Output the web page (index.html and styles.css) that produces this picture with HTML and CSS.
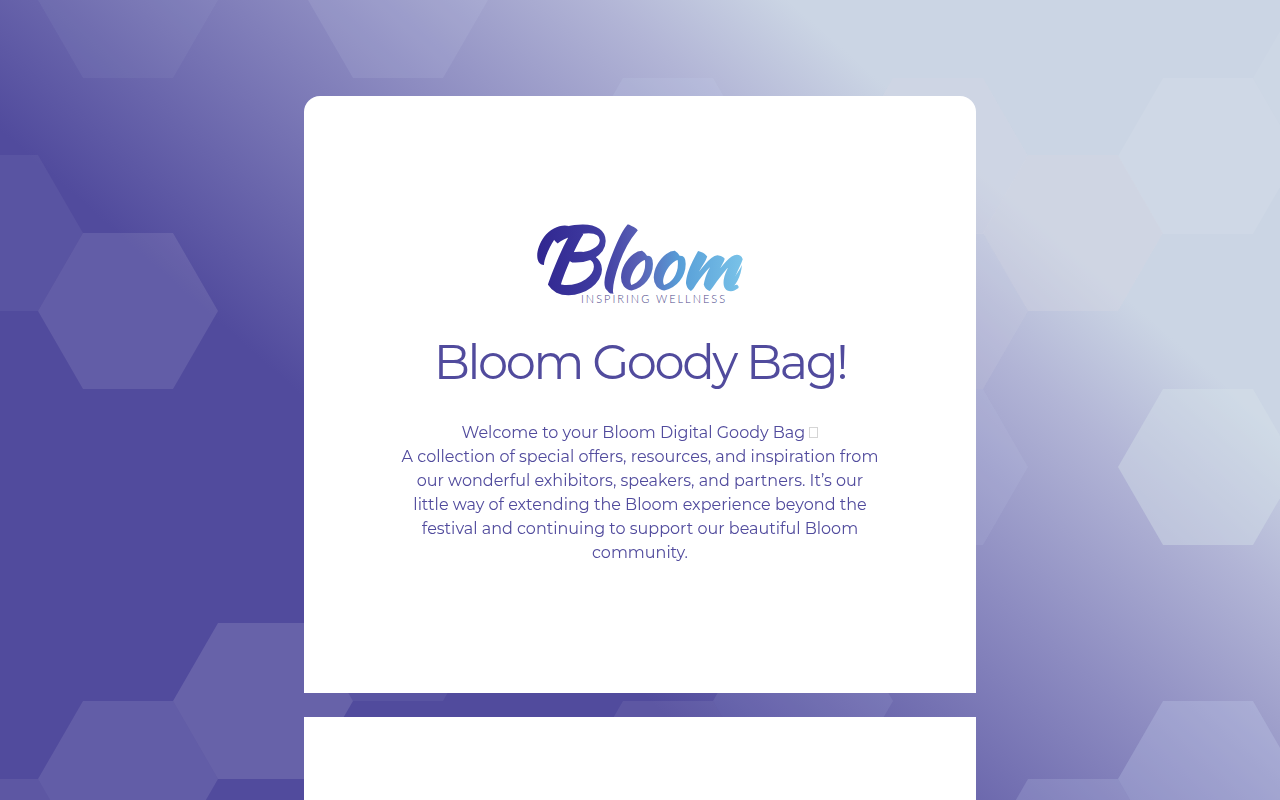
FILE: index.html
```html
<!DOCTYPE html>
<html lang="en">
<head>
    <meta charset="UTF-8">
    <meta name="viewport" content="width=device-width, initial-scale=1.0">
    <title>Bloom Goody Bag!</title>
    <link rel="stylesheet" href="styles.css">
</head>
<body>

    <!-- Honeycomb background -->
    <svg class="backdrop" viewBox="0 0 1280 800" preserveAspectRatio="xMidYMid slice" aria-hidden="true">
        <defs>
            <linearGradient id="sky" gradientUnits="userSpaceOnUse" x1="0" y1="130" x2="408" y2="-334">
                <stop offset="0" stop-color="#514b9d"/>
                <stop offset="0.5" stop-color="#8d8cc1"/>
                <stop offset="0.8" stop-color="#b2b5d6"/>
                <stop offset="1" stop-color="#cbd5e4"/>
            </linearGradient>
            <polygon id="hex" points="-90,0 -45,-78 45,-78 90,0 45,78 -45,78"/>
        </defs>
        <rect width="1280" height="800" fill="url(#sky)"/>
        <g fill="#fff">
            <use href="#hex" x="-7" y="233" opacity="0.05"/>
            <use href="#hex" x="128" y="311" opacity="0.1"/>
            <use href="#hex" x="263" y="701" opacity="0.13"/>
            <use href="#hex" x="128" y="779" opacity="0.1"/>
            <use href="#hex" x="-7" y="857" opacity="0.07"/>
            <use href="#hex" x="398" y="623" opacity="0.05"/>
            <use href="#hex" x="668" y="779" opacity="0.07"/>
            <use href="#hex" x="1208" y="156" opacity="0.08"/>
            <use href="#hex" x="1343" y="78" opacity="0.05"/>
        </g>
        <g fill="#ccd6f2">
            <use href="#hex" x="128" y="0" opacity="0.06"/>
            <use href="#hex" x="398" y="0" opacity="0.12"/>
            <use href="#hex" x="668" y="156" opacity="0.15"/>
            <use href="#hex" x="803" y="701" opacity="0.1"/>
            <use href="#hex" x="938" y="467" opacity="0.1"/>
            <use href="#hex" x="1208" y="779" opacity="0.25"/>
            <use href="#hex" x="1073" y="857" opacity="0.18"/>
        </g>
        <g fill="#d6d6e3">
            <use href="#hex" x="938" y="156" opacity="0.3"/>
            <use href="#hex" x="938" y="311" opacity="0.15"/>
            <use href="#hex" x="1073" y="233" opacity="0.35"/>
        </g>
        <use href="#hex" x="1208" y="467" fill="#d6e2ea" opacity="0.42"/>
    </svg>

    <main class="page">
        <section class="card intro">
            <svg class="logo" viewBox="0 0 208 80" role="img" aria-label="Bloom Inspiring Wellness">
                <defs>
                    <linearGradient id="brush" gradientUnits="userSpaceOnUse" x1="0" y1="30" x2="206" y2="30">
                        <stop offset="0" stop-color="#302690"/>
                        <stop offset="0.3" stop-color="#3f3ba0"/>
                        <stop offset="0.5" stop-color="#5960b5"/>
                        <stop offset="0.7" stop-color="#589fd8"/>
                        <stop offset="1" stop-color="#79c2e8"/>
                    </linearGradient>
                </defs>
                <!-- Brush swashes either side of the wordmark -->
                <g fill="url(#brush)">
                    <path d="M8 41C-2 40 0 24 8 13C15 4 25 0 33 2C26 6 19 13 14 23C10 31 8 37 8 41Z"/>
                    <path d="M192 66C200 63 205 52 206 41C202 49 197 56 190 60Z"/>
                </g>
                <text class="logo-name" x="2" y="63"><tspan class="logo-initial">B</tspan>loom</text>
                <text class="logo-tagline" x="45" y="79">INSPIRING WELLNESS</text>
            </svg>
            <h1>Bloom Goody Bag!</h1>
            <p>
                Welcome to your Bloom Digital Goody Bag <span class="glyph-box"></span><br>
                A collection of special offers, resources, and inspiration from
                our wonderful exhibitors, speakers, and partners. It’s our
                little way of extending the Bloom experience beyond the
                festival and continuing to support our beautiful Bloom
                community.
            </p>
        </section>

        <section class="card"></section>
    </main>

</body>
</html>
```

FILE: styles.css
```css
body {
    margin: 0;
    background: #514b9d;
    color: #514b9d;
    font-family: Montserrat, Inter, sans-serif;
}

.backdrop {
    position: fixed;
    top: 0;
    left: 0;
    width: 100%;
    height: 100%;
    z-index: -1;
}

.page {
    display: flex;
    flex-direction: column;
    gap: 24px;
    max-width: 672px;
    margin: 0 auto;
    padding: 96px 0;
}

.card {
    padding: 128px 96px;
    background: #fff;
    text-align: center;
}

.intro {
    border-radius: 16px 16px 0 0;
}

.logo {
    display: block;
    width: 208px;
    margin: 0 auto;
    overflow: visible;
}

.logo-name {
    fill: url(#brush);
    font-family: "Kaushan Script", Pacifico, "Dancing Script", Lato, sans-serif;
    font-size: 74px;
    font-weight: 700;
}

.logo-initial {
    font-size: 84px;
}

.logo-tagline {
    fill: #4b4689;
    font-family: Lato, sans-serif;
    font-size: 11px;
    font-weight: 300;
    letter-spacing: 2px;
}

h1 {
    margin: 28px 0 29px;
    font-size: 48px;
    font-weight: 400;
    line-height: 60px;
    letter-spacing: -0.05em;
}

p {
    margin: 0;
    font-size: 16px;
    line-height: 24px;
}

.glyph-box {
    display: inline-block;
    width: 7px;
    height: 9px;
    border: 1px solid #d5d5d5;
}
```
